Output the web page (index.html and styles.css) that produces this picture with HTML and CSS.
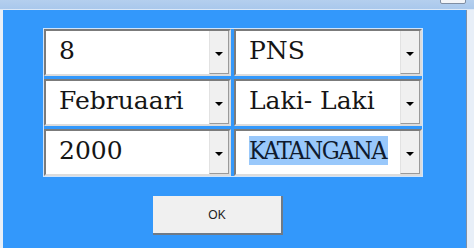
FILE: index.html
```html
<!DOCTYPE html>
<html lang="id">
<head>
  <meta charset="UTF-8" />
  <title>Form</title>
  <link rel="stylesheet" href="styles.css">
</head>
<body>

<div class="window">
  <div class="titlebar">
    <span class="close-btn"></span>
  </div>

  <div class="frame">
    <div class="client">
      <div class="fields">
        <div class="field"><span class="value">8</span><span class="drop"><i class="arrow"></i></span></div>
        <div class="field"><span class="value">PNS</span><span class="drop"><i class="arrow"></i></span></div>
        <div class="field"><span class="value">Februaari</span><span class="drop"><i class="arrow"></i></span></div>
        <div class="field"><span class="value">Laki- Laki</span><span class="drop"><i class="arrow"></i></span></div>
        <div class="field"><span class="value">2000</span><span class="drop"><i class="arrow"></i></span></div>
        <div class="field"><span class="value"><mark class="selected">KATANGANA</mark></span><span class="drop"><i class="arrow"></i></span></div>
      </div>

      <button class="ok-btn">OK</button>
    </div>
  </div>
</div>

</body>
</html>
```

FILE: styles.css
```css
* { margin: 0; padding: 0; box-sizing: border-box; }

body {
  width: 474px;
  height: 248px;
  overflow: hidden;
  background: #e3ecf7;
  font-family: "DejaVu Serif", serif;
}

.window {
  display: flex;
  flex-direction: column;
  height: 248px;
}

/* title bar, mostly cut off */
.titlebar {
  height: 10px;
  background: linear-gradient(#b4cfee, #a9c8ec);
  border-bottom: 1px solid #dbe8f7;
  position: relative;
}
.close-btn {
  position: absolute;
  right: 8px;
  top: -3px;
  width: 26px;
  height: 7px;
  background: #f3f5f8;
  border: 1px solid #7f8ea3;
  border-radius: 0 0 2px 2px;
}

.frame {
  flex: 1;
  display: flex;
  padding-left: 3px;
  padding-right: 7px;
  background: #e8eff8;
}

.client {
  flex: 1;
  background: #3398fb;
  border-right: 1px solid #7d8fa6;
  padding: 19px 0 0 41px;
}

.fields {
  display: grid;
  grid-template-columns: 187px 188px;
  grid-auto-rows: 47px;
  gap: 3px;
  width: 378px;
  outline: 1px solid #cfe4fb;
}

.field {
  display: flex;
  background: #fff;
  border: 2px solid;
  border-color: #7b7b7b #dcdcdc #dcdcdc #7b7b7b;
}

.value {
  flex: 1;
  min-width: 0;
  overflow: hidden;
  padding: 6px 0 0 13px;
  font-size: 25px;
  line-height: 28px;
  color: #151515;
  white-space: nowrap;
}

.selected {
  background: #99c8fb;
  color: #0f1a2e;
  font-stretch: condensed;
  letter-spacing: -1.5px;
  padding: 0 2px 0 0;
}

.drop {
  flex-shrink: 0;
  width: 20px;
  display: flex;
  align-items: center;
  justify-content: center;
  padding-top: 3px;
  background: #f0f0f0;
  border-left: 1px solid #e2e2e2;
  border-right: 1px solid #9a9a9a;
  border-bottom: 1px solid #9a9a9a;
}

.arrow {
  width: 0;
  height: 0;
  border-top: 4px solid #000;
  border-left: 4px solid transparent;
  border-right: 4px solid transparent;
}

.ok-btn {
  display: block;
  margin: 20px 0 0 109px;
  width: 130px;
  height: 39px;
  background: #f0f0f0;
  border: none;
  border-right: 2px solid #6f7a86;
  border-bottom: 2px solid #6f7a86;
  font-family: "Liberation Sans", sans-serif;
  font-size: 12px;
  color: #222;
}
```
